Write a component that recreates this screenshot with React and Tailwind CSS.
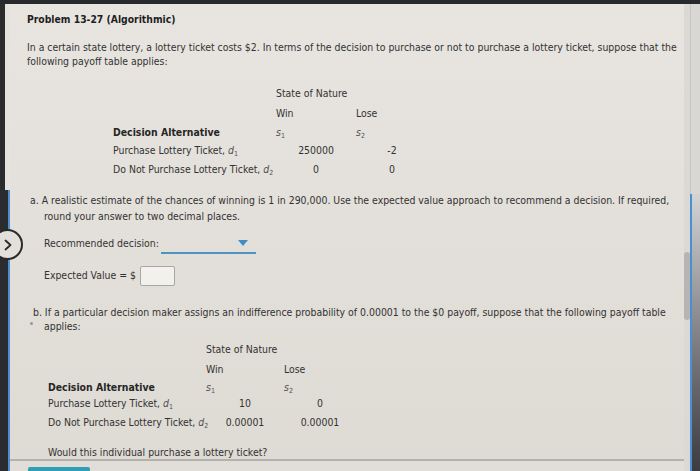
import React from 'react';

const Sub = ({ v, n }) => (
  <span className="italic text-[#505050]">
    {v}
    <sub className="not-italic text-[7px]">{n}</sub>
  </span>
);

const PayoffTable = ({ cols, rows, rowHeights, className }) => (
  <div className={className}>
    {rows.map((r, i) => (
      <div
        key={i}
        className={`grid items-center ${cols} ${rowHeights[i]}`}
      >
        <div className={r.bold ? 'font-bold text-[#262626]' : ''}>{r.label}</div>
        <div className={r.center ? 'text-center' : ''}>{r.a}</div>
        <div className={r.center ? 'text-center' : ''}>{r.b}</div>
      </div>
    ))}
  </div>
);

const LeftEdge = () => (
  <div className="w-[10px] flex flex-col">
    <div className="h-[186px] flex">
      <div className="w-[5px] bg-[#2b2c2e]" />
      <div className="flex-1 bg-[#e6e3de]" />
    </div>
    <div className="flex-1 flex">
      <div className="w-[8px] bg-[#2a2c30]" />
      <div className="w-[2px] bg-[#4a8fd3]" />
    </div>
  </div>
);

const RightEdge = () => (
  <div className="w-[10px] flex flex-col">
    <div className="h-[190px] flex">
      <div className="w-[1px] bg-[#c9c6c2]" />
      <div className="flex-1 bg-[#d9d7d4]" />
    </div>
    <div className="flex-1 flex">
      <div className="w-[2px] bg-[#4a8fd3]" />
      <div className="flex-1 bg-linear-to-b from-[#d4d4d5] to-[#3a3c40]" />
    </div>
  </div>
);

export default function App() {
  const table1 = [
    { label: '', a: 'State of Nature', b: '' },
    { label: '', a: 'Win', b: 'Lose' },
    { label: 'Decision Alternative', bold: true, a: <Sub v="s" n="1" />, b: <Sub v="s" n="2" /> },
    { label: <>Purchase Lottery Ticket, <Sub v="d" n="1" /></>, a: '250000', b: '-2', center: true },
    { label: <>Do Not Purchase Lottery Ticket, <Sub v="d" n="2" /></>, a: '0', b: '0', center: true },
  ];

  const table2 = [
    { label: '', a: 'State of Nature', b: '' },
    { label: '', a: 'Win', b: 'Lose' },
    { label: 'Decision Alternative', bold: true, a: <Sub v="s" n="1" />, b: <Sub v="s" n="2" /> },
    { label: <>Purchase Lottery Ticket, <Sub v="d" n="1" /></>, a: '10', b: '0', center: true },
    { label: <>Do Not Purchase Lottery Ticket, <Sub v="d" n="2" /></>, a: '0.00001', b: '0.00001', center: true },
  ];

  return (
    <div className="relative w-[700px] h-[471px] overflow-hidden bg-[#222427] font-['DejaVu_Sans_Condensed','DejaVu_Sans',sans-serif] [font-stretch:condensed] text-[10.4px] text-[#323232]">
      <div className="h-[4px] bg-[#27292c]" />
      <div className="flex h-[467px]">
        <LeftEdge />

        <div className="flex-1 flex flex-col bg-linear-to-b from-[#e8e5e0] to-[#dedad4]">
          <div className="pl-[17px] flex-1 whitespace-nowrap">
            <div className="mt-[8px] leading-[14px] font-bold text-[10.3px] text-[#1e1e1e]">
              Problem 13-27 (Algorithmic)
            </div>
            <p className="mt-[14px] leading-[14px]">
              In a certain state lottery, a lottery ticket costs $2. In terms of the decision to purchase or not to purchase a lottery ticket, suppose that the
              <br />
              following payoff table applies:
            </p>

            <PayoffTable
              className="mt-[16px] ml-[86px]"
              cols="grid-cols-[163px_80px_72px]"
              rowHeights={['h-[20px]', 'h-[20px]', 'h-[18px]', 'h-[18px]', 'h-[20px]']}
              rows={table1}
            />

            <p className="mt-[12px] leading-[16px] pl-[17px] -indent-[14px]">
              a. A realistic estimate of the chances of winning is 1 in 290,000. Use the expected value approach to recommend a decision. If required,
              <br />
              round your answer to two decimal places.
            </p>

            <div className="mt-[10px] ml-[17px] h-[20px] flex items-center">
              <span>Recommended decision:</span>
              <div className="ml-[2px] w-[95px] h-[20px] border-b-2 border-[#4f93c4] flex items-center justify-end pr-[8px]">
                <span className="w-0 h-0 border-l-[5px] border-r-[5px] border-t-[6px] border-l-transparent border-r-transparent border-t-[#3f8cc9]" />
              </div>
            </div>

            <div className="mt-[12px] ml-[17px] h-[20px] flex items-center">
              <span>Expected Value = $</span>
              <div className="ml-[4px] w-[35px] h-[20px] bg-[#f2f1ee] border border-[#a9a7a3] rounded-[2px]" />
            </div>

            <div className="relative mt-[19px]">
              <p className="leading-[14px] pl-[17px] -indent-[11px]">
                b. If a particular decision maker assigns an indifference probability of 0.00001 to the $0 payoff, suppose that the following payoff table
                <br />
                applies:
              </p>
              <span className="absolute left-[3px] top-[17px] w-[3px] h-[3px] rounded-full bg-[#9a9792]" />
            </div>

            <PayoffTable
              className="mt-[7px] ml-[21px]"
              cols="grid-cols-[158px_78px_72px]"
              rowHeights={['h-[20px]', 'h-[20px]', 'h-[15px]', 'h-[18px]', 'h-[20px]']}
              rows={table2}
            />

            <div className="mt-[12px] ml-[21px] leading-[14px]">
              Would this individual purchase a lottery ticket?
            </div>
          </div>

          <div className="border-t-2 border-[#b4b1ac] h-[13px] bg-[#e1ded9] flex items-end pl-[18px]">
            <div className="w-[62px] h-[4px] rounded-t-[2px] bg-[#2f9fb6]" />
          </div>
        </div>

        <div className="w-[6px] bg-[#dcd9d4] pt-[248px]">
          <div className="h-[68px] rounded-[3px] bg-[#b6b5b3]" />
        </div>
        <RightEdge />
      </div>

      <div className="absolute left-[-8px] top-[229px] w-[31px] h-[31px] rounded-full border-2 border-[#2a2a2a] bg-[#e3e0db] flex items-center justify-end pr-[9px]">
        <svg width="8" height="12" viewBox="0 0 8 12" fill="none">
          <path d="M1.5 1.5 L6.5 6 L1.5 10.5" stroke="#2a2a2a" strokeWidth="1.8" strokeLinecap="round" strokeLinejoin="round" />
        </svg>
      </div>
    </div>
  );
}
